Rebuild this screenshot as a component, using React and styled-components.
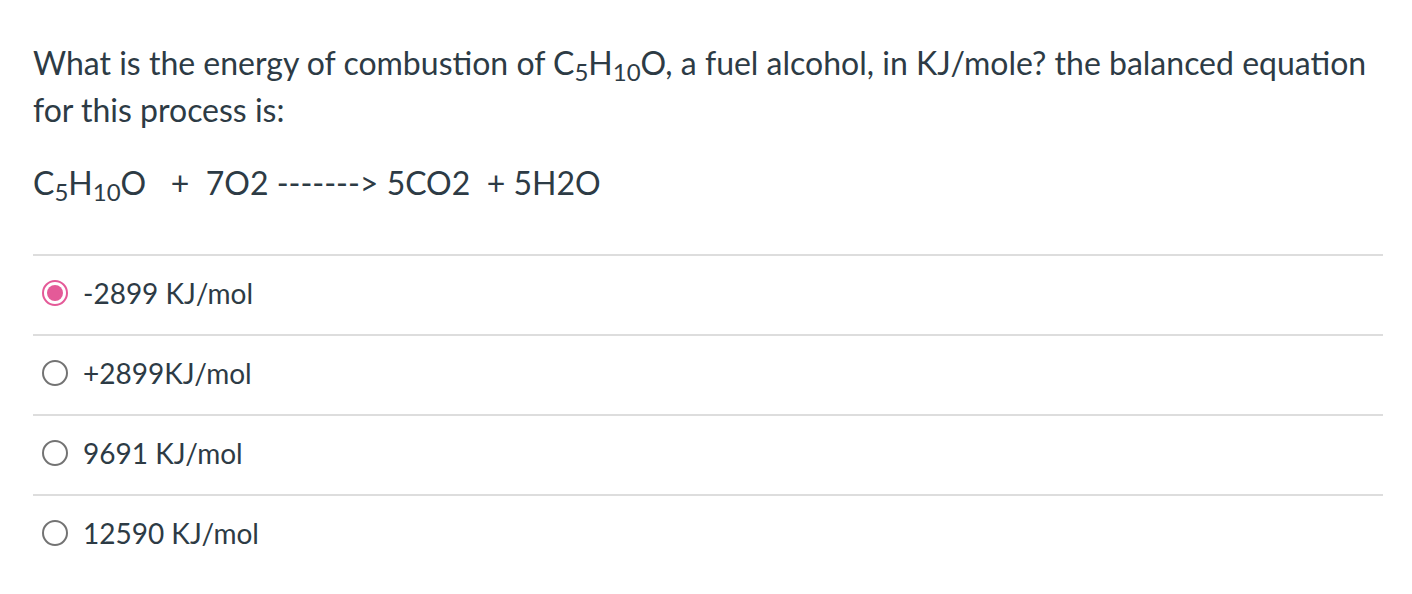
import styled, { createGlobalStyle } from "styled-components";

const GlobalStyle = createGlobalStyle`
  body {
    margin: 0;
    background: #fff;
    font-family: Lato, "Liberation Sans", sans-serif;
    color: #2d3b45;
  }
`;

const Page = styled.div`
  padding: 39px 29px 0 33px;
`;

const Question = styled.div`
  font-size: 32px;
  line-height: 47px;
`;

const Para = styled.p`
  margin: 0 0 26px;
`;

const Sub = styled.sub`
  font-size: 0.75em;
  line-height: 0;
  vertical-align: -0.25em;
`;

const Answers = styled.div`
  margin-top: 48px;
`;

const Row = styled.label`
  display: flex;
  align-items: center;
  gap: 15px;
  height: 80px;
  padding: 0 0 4px 9px;
  box-sizing: border-box;
  border-top: 2px solid #dddddd;
  font-size: 28px;
`;

const Radio = styled.span`
  box-sizing: border-box;
  width: 26px;
  height: 26px;
  border-radius: 50%;
  border: 2px solid ${(p) => (p.$checked ? "#e45a98" : "#737373")};
  display: flex;
  align-items: center;
  justify-content: center;
  &::after {
    content: "";
    display: ${(p) => (p.$checked ? "block" : "none")};
    width: 16px;
    height: 16px;
    border-radius: 50%;
    background: #e45a98;
  }
`;

const answers = [
  { text: "-2899 KJ/mol", checked: true },
  { text: "+2899KJ/mol" },
  { text: "9691 KJ/mol" },
  { text: "12590 KJ/mol" },
];

export default function App() {
  return (
    <Page>
      <GlobalStyle />
      <Question>
        <Para>
          What is the energy of combustion of C<Sub>5</Sub>H<Sub>10</Sub>O, a
          fuel alcohol, in KJ/mole? the balanced equation for this process is:
        </Para>
        <Para>
          C<Sub>5</Sub>H<Sub>10</Sub>O&nbsp;&nbsp; + &nbsp;7O2 -------&gt; 5CO2
          &nbsp;+ 5H2O
        </Para>
      </Question>
      <Answers>
        {answers.map((a) => (
          <Row key={a.text}>
            <Radio $checked={a.checked} />
            {a.text}
          </Row>
        ))}
      </Answers>
    </Page>
  );
}
